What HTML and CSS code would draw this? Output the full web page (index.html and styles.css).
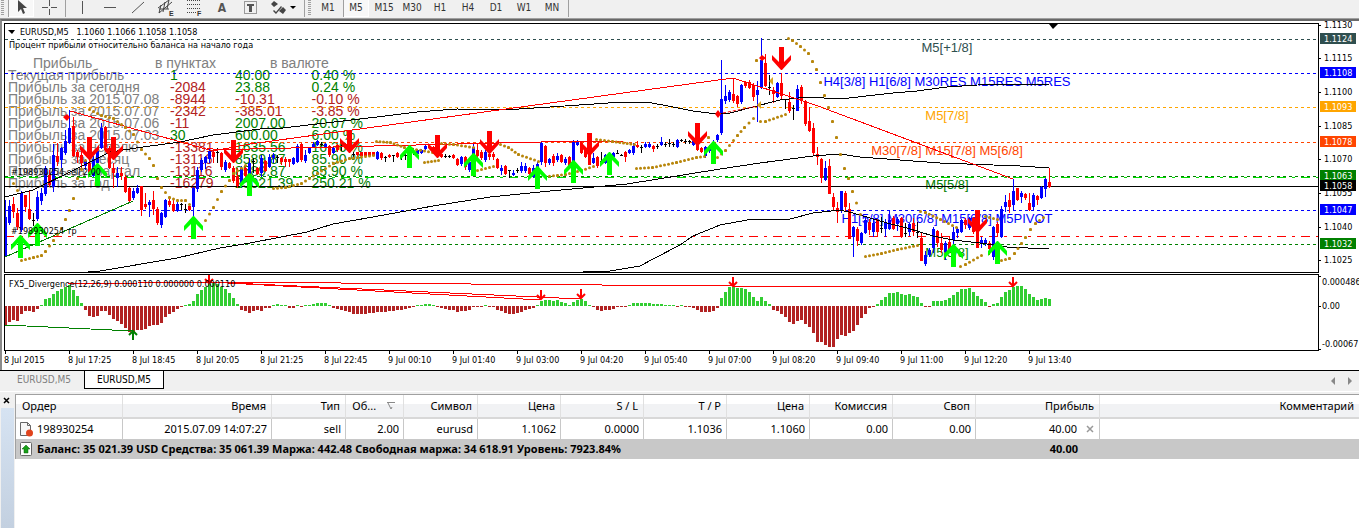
FILE: index.html
```html
<!DOCTYPE html>
<html lang="ru">
<head>
  <meta charset="UTF-8" />
  <meta name="viewport" content="width=device-width, initial-scale=1.0" />
  <title>EURUSD,M5</title>
  <link rel="stylesheet" href="styles.css">
</head>
<body>
  <div class="toolbar">
    <span class="grip"></span>
    <div class="tools">
      <button class="tool active" type="button" aria-label="Курсор">
        <svg width="20" height="18"><path d="M7 0v12l3-3 2 5 2-1-2-5h4z" fill="#444"/></svg>
      </button>
      <button class="tool" type="button" aria-label="Перекрестие">
        <svg width="20" height="18"><path d="M3 7.5h6M12 7.5h6M10.5 0v6M10.5 9v6" stroke="#555"/></svg>
      </button>
    </div>
    <span class="sep"></span>
    <div class="tools">
      <button class="tool" type="button" aria-label="Вертикальная линия">
        <svg width="20" height="18"><path d="M10.5 1v13" stroke="#555"/></svg>
      </button>
      <button class="tool" type="button" aria-label="Горизонтальная линия">
        <svg width="20" height="18"><path d="M4 7.5h12" stroke="#555"/></svg>
      </button>
      <button class="tool" type="button" aria-label="Трендовая линия">
        <svg width="20" height="18"><path d="M4 13L16 2" stroke="#555"/></svg>
      </button>
      <button class="tool" type="button" aria-label="Канал">
        <svg width="20" height="18"><path d="M2 8L13 0M3 13L16 2M5 5l-2 8M9 2L7 12M13 0l-2 9M3 9h10" stroke="#444" fill="none"/><text x="13" y="16" class="icon-letter">E</text></svg>
      </button>
      <button class="tool" type="button" aria-label="Фибоначчи">
        <svg width="20" height="18"><path d="M3 .5h14M3 4.5h14M3 8.5h14M3 12.5h9" stroke="#444" stroke-dasharray="1 1"/><text x="13" y="16" class="icon-letter">F</text></svg>
      </button>
      <button class="tool letter" type="button">A</button>
      <button class="tool" type="button" aria-label="Метка">
        <svg width="20" height="18"><rect x="4.5" y="1.5" width="12" height="12" fill="none" stroke="#444" stroke-dasharray="1 1"/><path d="M7 4h7v2h-2v6h-3V6H7z" fill="#555"/></svg>
      </button>
      <button class="tool arrows" type="button" aria-label="Стрелки">
        <svg width="28" height="18"><path d="M5 1l4 3-4 3-3-3zM5 10l2 2 5-6 1 1-6 7-3-3zM14 7l3 3-3 4-4-3z" fill="#444"/><path d="M24 6h6l-3 3z" fill="#000" transform="translate(-3 0)"/></svg>
      </button>
    </div>
    <span class="sep"></span>
    <span class="grip"></span>
    <div class="tools">
      <button class="tool" type="button">M1</button>
      <button class="tool active" type="button">M5</button>
      <button class="tool" type="button">M15</button>
      <button class="tool" type="button">M30</button>
      <button class="tool" type="button">H1</button>
      <button class="tool" type="button">H4</button>
      <button class="tool" type="button">D1</button>
      <button class="tool" type="button">W1</button>
      <button class="tool" type="button">MN</button>
    </div>
    <span class="sep"></span>
  </div>

  <div class="chart-window">
    <div class="chart-row price-row">
      <div class="pane">
        <table class="profit">
          <thead>
            <tr><th class="c-name">Прибыль</th><th class="c-points">в пунктах</th><th class="c-money" colspan="2">в валюте</th></tr>
          </thead>
          <tbody>
            <tr><td>Текущая прибыль</td><td class="up">1</td><td class="up">40.00</td><td class="up">0.40 %</td></tr>
            <tr><td>Прибыль за сегодня</td><td class="down">-2084</td><td class="up">23.88</td><td class="up">0.24 %</td></tr>
            <tr><td>Прибыль за 2015.07.08</td><td class="down">-8944</td><td class="down">-10.31</td><td class="down">-0.10 %</td></tr>
            <tr><td>Прибыль за 2015.07.07</td><td class="down">-2342</td><td class="down">-385.01</td><td class="down">-3.85 %</td></tr>
            <tr><td>Прибыль за 2015.07.06</td><td class="down">-11</td><td class="up">2007.00</td><td class="up">20.07 %</td></tr>
            <tr><td>Прибыль за 2015.07.03</td><td class="up">30</td><td class="up">600.00</td><td class="up">6.00 %</td></tr>
            <tr><td>Прибыль за неделю</td><td class="down">-13381</td><td class="up">1635.56</td><td class="up">16.36 %</td></tr>
            <tr><td>Прибыль за месяц</td><td class="down">-13116</td><td class="up">8589.87</td><td class="up">85.90 %</td></tr>
            <tr><td>Прибыль за квартал</td><td class="down">-13116</td><td class="up">8589.87</td><td class="up">85.90 %</td></tr>
            <tr><td>Прибыль за год</td><td class="down">-16279</td><td class="up">25021.39</td><td class="up">250.21 %</td></tr>
          </tbody>
        </table>
        <svg class="plot" id="price"></svg>
      </div>
      <svg class="axis" id="priceAxis"></svg>
    </div>
    <div class="chart-row osc-row">
      <div class="pane"><svg class="plot" id="osc"></svg></div>
      <svg class="axis" id="oscAxis"></svg>
    </div>
    <svg class="time-axis" id="timeAxis"></svg>
  </div>

  <div class="tabs">
    <button class="tab" type="button">EURUSD,M5</button>
    <button class="tab current" type="button">EURUSD,M5</button>
    <div class="tab-scroll">
      <button type="button" aria-label="Назад"><svg width="6" height="8"><path d="M5 0v8L1 4z" fill="#888"/></svg></button>
      <button type="button" aria-label="Вперёд"><svg width="6" height="8"><path d="M1 0v8l4-4z" fill="#888"/></svg></button>
    </div>
  </div>

  <div class="terminal">
    <div class="side">
      <button class="close" type="button" aria-label="Закрыть"><svg width="8" height="8"><path d="M1 1l5 5M6 1L1 6" stroke="#000" stroke-width="1.5"/></svg></button>
      <div class="side-strip"></div>
    </div>
    <table class="orders">
      <colgroup>
        <col class="w-order"><col class="w-time"><col class="w-symbol"><col class="w-lots"><col class="w-symbol">
        <col class="w-num"><col class="w-num"><col class="w-num"><col class="w-num"><col class="w-num"><col class="w-num">
        <col class="w-profit"><col>
      </colgroup>
      <thead>
        <tr>
          <th class="left">Ордер</th><th>Время</th><th>Тип</th>
          <th class="lots">Об... <svg width="8" height="8"><path d="M0 .5h8M1 1l3 6 1-2" stroke="#888" fill="none"/></svg></th>
          <th>Символ</th><th>Цена</th><th>S / L</th><th>T / P</th><th>Цена</th><th>Комиссия</th><th>Своп</th><th>Прибыль</th><th>Комментарий</th>
        </tr>
      </thead>
      <tbody>
        <tr>
          <td class="left">
            <div class="with-icon">
              <svg width="15" height="16"><path d="M1.5 1.5h7l3 3v10h-10z" fill="#f6f6f6" stroke="#666"/><path d="M8.5 1.5v3h3" fill="none" stroke="#666"/><circle cx="10.500" cy="12" r="3.5" fill="#e0431c"/></svg>
              <span>198930254</span>
            </div>
          </td>
          <td>2015.07.09 14:07:27</td><td>sell</td><td>2.00</td><td>eurusd</td><td>1.1062</td><td>0.0000</td><td>1.1036</td><td>1.1060</td><td>0.00</td><td>0.00</td>
          <td class="profit-cell">40.00 <button class="close-order" type="button" aria-label="Закрыть ордер"><svg width="8" height="8"><path d="M1 1l6 6M7 1L1 7" stroke="#999" stroke-width="1.5"/></svg></button></td>
          <td></td>
        </tr>
        <tr class="summary">
          <td class="left" colspan="11">
            <div class="with-icon">
              <svg width="15" height="16"><rect x="1.5" y="1.5" width="11" height="13" rx="1" fill="#fff" stroke="#666"/><path d="M7 4l4 4H9v4H5V8H3z" fill="#18a018" stroke="#0a600a" stroke-width=".5"/></svg>
              <span>Баланс: 35 021.39 USD</span><span>Средства: 35 061.39</span><span>Маржа: 442.48</span><span>Свободная маржа: 34 618.91</span><span>Уровень: 7923.84%</span>
            </div>
          </td>
          <td class="profit-cell">40.00</td>
          <td></td>
        </tr>
      </tbody>
    </table>
  </div>

  <script src="chart.js"></script>
</body>
</html>
```

FILE: styles.css
```css
body {
  margin: 0;
  min-height: 100vh;
  display: flex;
  flex-direction: column;
  background-color: #f0f0f0;
  color: #000;
  font-family: "Noto Sans", sans-serif;
  font-size: 11px;
  overflow: hidden;
}

button {
  margin: 0;
  padding: 0;
  border: none;
  background: none;
  font: inherit;
  color: inherit;
}

svg {
  display: block;
}

/* Toolbar */
.toolbar {
  height: 18px;
  display: flex;
  align-items: flex-start;
  border-bottom: 1px solid #a0a0a0;
}

.grip {
  width: 3px;
  height: 16px;
  margin: 0 3px 0 1px;
  background: repeating-linear-gradient(#a0a0a0 0 1px, #f0f0f0 1px 2px);
}

.tools {
  display: flex;
}

.tool {
  width: 28px;
  height: 17px;
  display: flex;
  justify-content: center;
  font-family: "DejaVu Sans Condensed", sans-serif;
  font-size: 10px;
  line-height: 16px;
  color: #333;
}

.tool.active {
  width: 26px;
  margin: 0 1px;
  background-color: #f8f8f8;
  box-shadow: inset 1px 0 #a0a0a0, inset -1px -1px #fff;
}

.tool.letter {
  font-size: 12px;
  font-weight: bold;
  color: #555;
}

.tool.arrows {
  width: 38px;
}

.icon-letter {
  font: bold 7px "Liberation Sans", sans-serif;
  fill: #333;
}

.sep {
  width: 1px;
  height: 17px;
  margin: 0 2px;
  background-color: #a0a0a0;
}

/* Chart window */
.chart-window {
  background-color: #fff;
  border-top: 2px solid #696969;
  border-left: 2px solid #8a8a8a;
  padding: 2px 0 0 2px;
}

.chart-row {
  display: flex;
}

.price-row {
  height: 250px;
  margin-bottom: 1px;
}

.osc-row {
  height: 77px;
}

.pane {
  flex: 1;
  min-width: 0;
  position: relative;
  border: 1px solid #000;
}

.plot {
  width: 100%;
  height: 100%;
  position: relative;
}

.axis {
  width: 40px;
  height: 100%;
  overflow: visible;
}

.time-axis {
  width: 100%;
  height: 19px;
}

.chart-text {
  font-family: "DejaVu Sans Condensed", sans-serif;
  font-size: 9px;
}

.level {
  font-family: "Liberation Sans", sans-serif;
  font-size: 13px;
  text-anchor: middle;
}

/* Profit statistics drawn over the chart */
.profit {
  position: absolute;
  top: 33px;
  left: 3px;
  width: 380px;
  table-layout: fixed;
  border-collapse: collapse;
  font-family: "Liberation Sans", sans-serif;
  font-size: 14px;
  line-height: 12px;
  color: #808080;
  white-space: nowrap;
}

.profit th,
.profit td {
  height: 12px;
  padding: 0;
  font-weight: normal;
  text-align: left;
}

.profit .c-name {
  width: 137px;
  padding-left: 25px;
}

.profit .c-points {
  width: 65px;
  text-indent: -15px;
}

.profit .c-money {
  text-indent: 35px;
}

.up {
  color: #008000;
}

.down {
  color: #b22222;
}

/* Chart tabs */
.tabs {
  display: flex;
  height: 20px;
  border-top: 1px solid #000;
  border-bottom: 1px solid #fff;
  padding-left: 4px;
}

.tab {
  width: 80px;
  height: 18px;
  color: #808080;
  font-family: "DejaVu Sans Condensed", sans-serif;
  font-size: 10px;
  line-height: 16px;
}

.tab.current {
  background-color: #fff;
  color: #000;
  border: 1px solid #000;
  border-top: none;
}

.tab-scroll {
  display: flex;
  gap: 11px;
  margin-left: auto;
  padding-right: 6px;
}

/* Terminal */
.terminal {
  flex: 1;
  display: flex;
  align-items: flex-start;
  margin-top: 2px;
  background: linear-gradient(to right, #f0f0f0 15px, #fff 15px);
}

.side {
  width: 15px;
  align-self: stretch;
  display: flex;
  flex-direction: column;
}

.close {
  height: 14px;
  padding-left: 3px;
}

.side-strip {
  flex: 1;
  margin: 0 1px;
  background: linear-gradient(#d6e3f2, #c3d0e0);
}

.orders {
  flex: 1;
  table-layout: fixed;
  border-collapse: separate;
  border-spacing: 0;
  border-left: 1px solid #a0a0a0;
  border-top: 1px solid #a0a0a0;
  white-space: nowrap;
}

.orders th,
.orders td {
  height: 20px;
  box-sizing: border-box;
  padding: 0 4px 0 6px;
  border-right: 1px solid #c8c8c8;
  text-align: right;
  font-weight: normal;
  line-height: 18px;
}

.orders th {
  height: 24px;
  padding-right: 5px;
  background: linear-gradient(#fff 40%, #f1f2f4 41%);
  border-right-color: #e0e0e0;
  border-bottom: 2px solid #d8d8d8;
}

.orders .left {
  text-align: left;
}

.orders th:last-child,
.orders td:last-child {
  border-right: none;
}

.orders td.left {
  padding-left: 3px;
}

.with-icon {
  display: flex;
  align-items: center;
  gap: 3px;
}

.lots svg {
  display: inline-block;
  margin: 0 3px 0 8px;
}

.orders .summary td {
  background-color: #c8c8c8;
  border-right: none;
  font-weight: bold;
}

.orders .profit-cell {
  padding-right: 22px;
  position: relative;
}

.close-order {
  position: absolute;
  right: 5px;
  top: 6px;
}

.w-order { width: 107px; }
.w-time { width: 149px; }
.w-symbol { width: 74px; }
.w-lots { width: 58px; }
.w-num { width: 83px; }
.w-profit { width: 124px; }
```

FILE: chart.js
```js
const NS = "http://www.w3.org/2000/svg";

function add(parent, tag, attrs, text) {
  const el = document.createElementNS(NS, tag);
  for (const key in attrs) el.setAttribute(key, attrs[key]);
  if (text) el.textContent = text;
  parent.appendChild(el);
  return el;
}

// colour, body top, body bottom, high, low
const candles = `b 217 256 200 257;b 206 223 200 225;r 204 212 197 218;r 213 227 208 230;b 193 230 191 232;r 195 207 195 212;r 209 219 191 220;k 220 221 213 226;b 197 219 191 221;b 193 201 188 205
b 168 194 166 196;r 175 185 170 187;b 155 187 144 192;r 156 162 143 166;b 148 160 147 168;b 141 153 130 155;b 128 143 110 144;r 126 156 117 157;r 152 157 150 163;r 155 163 147 168
b 161 166 159 170;r 163 175 160 176;b 159 176 156 177;b 151 163 147 165;b 128 148 123 149;r 127 147 126 150;r 148 168 146 169;r 168 173 163 188;b 173 178 167 187;r 173 176 167 180
r 177 192 175 193;r 188 201 187 203;b 191 198 188 200;b 188 193 185 194;r 186 210 186 216;r 204 207 193 209;b 202 205 200 217;r 200 209 191 215;r 209 223 207 225;b 213 225 212 228
b 200 217 199 218;r 201 205 199 207;r 204 211 198 212;b 204 211 202 212;k 204 205 203 210;k 209 210 204 213;r 206 210 206 211;b 188 207 187 220;b 170 189 167 192;b 160 170 158 172
b 157 163 156 169;b 151 159 148 163;r 152 157 149 163;k 152 153 148 163;r 153 167 152 170;b 162 170 160 172;r 163 168 162 169;r 168 181 166 183;r 176 186 168 188;b 168 185 166 187
r 168 176 166 178;b 163 175 158 176;k 161 162 158 173;r 168 174 167 175;b 158 173 155 177;r 161 171 160 172;b 157 167 154 168;b 155 158 153 163;k 157 158 155 163;r 158 162 157 165
r 159 162 157 167;r 159 162 159 167;b 158 164 157 165;b 146 162 144 163;r 144 160 143 162;b 155 161 150 163;b 148 153 147 154;b 144 147 142 148;b 141 145 140 146;k 144 145 142 146
b 144 147 143 148;r 146 155 145 157;b 148 153 147 154;r 145 150 144 152;k 146 147 144 151;r 144 148 143 149;r 140 151 138 152;k 154 155 152 157;r 152 155 152 156;r 152 156 152 156
r 152 156 152 156;r 152 156 152 156;r 152 156 152 156;b 152 159 151 160;r 153 158 152 160;k 157 158 156 162;r 155 157 154 158;k 155 156 155 162;r 153 157 152 158;k 155 156 154 160
k 155 156 154 160;b 150 153 149 154;k 152 153 148 155;b 150 154 149 156;b 150 153 149 154;b 146 149 145 150;k 147 148 144 149;r 147 153 146 154;b 153 157 152 158;r 154 157 154 158
k 156 157 154 158;k 156 157 155 158;r 155 158 154 159;r 159 165 158 166;b 157 164 156 166;r 157 167 156 170;b 162 170 158 172;b 147 160 144 162;r 150 156 143 160;r 152 158 150 160
b 152 160 150 162;r 154 157 150 160;r 154 157 152 160;r 159 168 158 169;b 168 171 165 175;r 166 174 165 175;k 170 171 170 178;b 173 175 170 176;k 170 171 168 173;b 166 171 162 173
b 166 171 163 173;r 168 174 167 177;b 168 177 165 178;b 164 172 162 173;b 143 162 142 165;r 146 163 145 167;b 159 163 158 165;r 156 163 154 166;b 156 160 153 162;r 155 162 154 163
b 159 163 157 165;r 157 166 156 168;b 142 165 140 166;b 141 145 140 146;r 143 153 142 154;r 148 157 147 158;r 153 165 152 165;b 158 163 153 164;r 157 166 156 168;k 161 162 152 163
b 155 163 154 164;b 154 157 153 158;b 153 157 152 158;k 153 154 150 154;k 155 156 154 156;r 152 157 151 162;b 150 153 149 154;b 146 153 143 155;r 145 147 141 148;k 147 148 145 153
b 144 147 142 148;b 144 147 142 148;r 146 149 145 152;k 146 147 144 149;b 142 145 137 146;k 144 145 142 147;k 143 144 139 147;k 144 145 142 147;b 140 147 139 148;k 140 141 139 142
k 141 142 139 144;k 141 142 140 144;b 141 145 140 146;r 143 150 142 151;r 148 152 147 153;b 147 156 146 158;b 147 151 145 153;b 142 147 140 148;b 135 140 134 142;b 99 133 60 135
b 96 101 85 104;b 92 100 90 102;r 94 101 78 103;r 96 104 95 107;b 85 102 84 104;r 82 86 81 88;r 82 88 80 89;r 85 97 83 101;b 90 95 81 122;b 60 88 38 89
r 63 86 54 87;k 87 88 75 95;r 90 94 87 103;b 83 97 82 98;r 83 96 73 100;k 99 100 99 109;r 102 111 92 113;k 108 109 105 120;b 89 111 85 111;r 87 100 85 104
r 101 124 100 126;r 121 131 107 132;r 128 153 123 156;r 154 157 147 165;r 159 178 158 183;b 168 180 161 181;r 166 194 159 194;r 197 207 193 211;r 208 212 202 223;b 191 211 191 213
r 193 207 191 211;r 209 239 203 239;b 227 237 226 257;r 229 241 227 246;b 233 243 232 245;b 220 233 217 234;r 222 230 219 235;b 223 232 218 237;r 220 232 219 237;k 228 229 217 233
b 222 229 219 237;b 220 229 210 230;r 218 229 216 230;b 219 224 217 231;r 218 237 217 238;k 233 234 223 237;b 224 232 223 236;r 223 232 218 236;k 232 233 222 238;r 238 261 232 261
b 255 264 251 266;b 250 255 248 257;b 229 248 227 253;r 231 243 230 247;r 243 250 233 253;b 243 252 241 260;r 242 250 237 252;b 232 240 227 246;b 229 233 227 238;b 220 232 219 233
r 220 225 218 229;b 218 228 217 230;r 218 232 217 234;r 232 248 231 248;b 240 244 237 248;b 240 243 238 246;r 243 249 241 255;b 227 257 226 260;r 224 233 222 236;b 209 237 206 238
b 202 207 195 212;r 200 207 193 213;b 191 205 179 210;r 188 200 188 201;b 193 197 191 203;r 194 198 193 200;r 203 210 193 211;b 195 207 193 210;r 196 200 195 205;b 187 198 186 199
b 179 189 178 197;r 182 187 168 188`.split(/[;\n]/).map(s => s.split(" "));

const bars = [
  -19,-16,-14,-15,-8,-5,-5,-6,-3,1,7,8,12,15,17,19,21,16,10,3,-4,-10,-11,-10,-5,-5,-9,-13,-15,-18,
  -22,-26,-26,-24,-24,-23,-20,-19,-19,-17,-11,-8,-6,-3,-1,1,2,5,12,16,19,22,23,22,19,17,13,8,2,-4,
  -5,-7,-5,-4,-5,-2,-2,1,2,1,1,-2,-2,1,-1,1,1,2,3,3,3,1,-2,-3,-4,-5,-6,-8,-8,-8,
  -8,-7,-7,-6,-6,-6,-5,-5,-4,-4,-3,-2,-1,1,1,2,2,1,-1,-2,-3,-4,-4,-6,-5,-5,-4,-1,-1,-1,
  1,-1,-1,-4,-5,-7,-8,-8,-7,-6,-4,-3,-2,1,5,6,6,5,6,4,3,1,4,6,7,5,1,-1,-4,-5,
  -4,-4,-3,-1,-1,-1,1,3,3,3,3,3,2,2,2,1,1,1,-1,1,-1,-1,-2,-4,-6,-6,-6,-5,-2,8,
  14,19,19,18,18,17,14,9,5,9,5,2,-4,-5,-8,-11,-16,-18,-15,-14,-18,-21,-27,-36,-36,-39,-41,-41,-33,-29,
  -30,-27,-25,-19,-12,-8,-2,-1,2,6,9,13,13,14,12,11,12,10,9,3,-1,-1,5,5,5,6,8,11,14,17,
  17,18,14,10,7,4,-1,2,3,9,14,16,19,20,20,17,12,9,6,7,8,7
];

// Parabolic SAR, one dot per candle along each segment
const sar = [
  [13,183, 17,190], [21,260, 33,257, 41,255, 45,251, 53,240, 61,228, 65,219, 69,210, 73,198, 77,178, 85,160],
  [89,109, 101,115, 113,118, 125,127, 133,134, 141,149, 149,158, 153,165, 157,178, 161,187, 169,197, 177,200, 185,200, 189,204],
  [205,220, 213,207, 221,191, 229,180, 233,173, 245,165], [273,188, 285,187, 301,183, 317,173, 333,163, 349,158, 373,155],
  [376,141, 390,142, 404,147, 432,152], [424,162, 438,160], [441,143, 453,144, 473,147], [477,170, 493,166],
  [500,144, 508,147, 518,154, 538,161], [545,176, 557,175, 565,174, 581,170, 593,166], [596,139, 612,141, 634,144],
  [636,168, 652,167, 676,162, 696,157, 704,156], [708,137, 708,137], [717,157, 725,150, 737,135, 744,127, 753,118],
  [756,60, 756,60], [760,121, 765,121, 785,114],
  [788,38, 792,40, 800,46, 808,53, 812,61, 816,69, 820,82, 824,95, 828,107, 832,121, 836,137, 840,154, 844,168, 848,178, 852,191, 860,214],
  [865,256, 881,253, 897,249, 917,245], [920,211, 925,212, 940,219, 956,227], [960,266, 965,264, 981,255], [985,216, 997,219],
  [1001,260, 1009,258, 1014,253, 1021,243, 1025,237, 1030,229, 1035,223, 1043,217]
];

const bands = [
  "5,197 33,190 70,172 110,152 143,147 180,142 213,135 260,129 283,128 317,124 377,117 417,112 457,109 503,110 550,107 623,102 647,102 673,107 693,111 717,114 730,113 753,107 780,100 807,97 840,99 893,93 917,91 947,87 993,84 1049,84",
  "88,272 100,271 177,258 220,248 250,243 307,232 333,224 373,217 433,206 490,197 550,191 627,184 683,175 720,169 760,163 813,156 840,154 860,157 940,163 1020,166 1049,168",
  "583,272 610,271 640,266 653,259 680,245 693,236 720,225 753,219 790,219 813,213 840,210 853,213 887,223 907,228 933,236 953,240 980,243 1007,247 1049,249"
];

const levels = [
  [39, "#2f4f4f", "1.1124", "M5[+1/8]"],
  [73, "#0000ff", "1.1108", "H4[3/8] H1[6/8] M30RES M15RES M5RES"],
  [107, "#ffa500", "1.1093", "M5[7/8]"],
  [142, "#ff4500", "1.1078", "M30[7/8] M15[7/8] M5[6/8]"],
  [176, "#008000", "1.1063", "M5[5/8]"],
  [210, "#0000ff", "1.1047", "H1[5/8] M30[6/8] M15[6/8] M5PIVOT"],
  [244, "#008000", "1.1032", "M5[3/8]"]
];

const sells = [[89,160], [113,160], [233,163], [349,153], [437,158], [489,154], [589,156], [697,146], [781,70], [977,233]];
const buys = [[20,235], [37,223], [97,163], [193,216], [249,173], [409,145], [473,153], [537,166], [573,160], [609,152], [713,141], [953,244], [997,241]];
const fill = { b: "#0000ff", r: "#ff0000", k: "#000000" };

// Price pane
const price = add(document.getElementById("price"), "g", { transform: "translate(-5 -24)" });
levels.forEach(([y, color, , label]) => {
  add(price, "text", { x: 947, y: y + 13, fill: color, class: "level" }, label);
  add(price, "line", { x1: 5, x2: "200%", y1: y + .5, y2: y + .5, stroke: color, "stroke-dasharray": "3 3" });
});
add(price, "line", { x1: 5, x2: "200%", y1: 177.5, y2: 177.5, stroke: "#00e000", "stroke-dasharray": "9 6 3 6" });
add(price, "line", { x1: 5, x2: "200%", y1: 186.5, y2: 186.5, stroke: "#000" });
add(price, "line", { x1: 5, x2: "200%", y1: 236.5, y2: 236.5, stroke: "#ff0000", "stroke-dasharray": "9 6 3 6" });

candles.forEach(([c, top, bottom, high, low], i) => {
  const x = 5 + i * 4;
  add(price, "rect", { x: x, y: high, width: 1, height: low - high, fill: fill[c] });
  add(price, "rect", { x: x - 1, y: top, width: 3, height: bottom - top, fill: fill[c] });
});

bands.forEach(points => add(price, "polyline", { points, fill: "none", stroke: "#000", "shape-rendering": "crispEdges" }));
["70,111 213,151 250,144 550,103 733,78 818,106 1013,179", "207,148 219,150 250,149 541,142 624,141"].forEach(points =>
  add(price, "polyline", { points, fill: "none", stroke: "#ff0000", "shape-rendering": "crispEdges" }));
add(price, "line", { x1: 5, y1: 257, x2: 133, y2: 201, stroke: "#008000", "shape-rendering": "crispEdges" });
add(price, "line", { x1: 718, y1: 114, x2: 758, y2: 106, stroke: "#ff0000", "stroke-dasharray": "3 2" });

sar.forEach(p => {
  for (let i = 0; i < p.length - 2; i += 2) {
    const steps = Math.max(1, Math.round((p[i + 2] - p[i]) / 4));
    for (let s = 0; s <= steps; s++) {
      const t = s / steps;
      add(price, "circle", { cx: p[i] + (p[i + 2] - p[i]) * t + .5, cy: p[i + 1] + (p[i + 3] - p[i + 1]) * t + .5, r: 1.5, fill: "#b8860b" });
    }
  }
});

["M773 77v8l-4-4z", "M761 101v8l-4-4z"].forEach(d => add(price, "path", { d, fill: "#daa520" }));
["M759 58l3-3 4 3-4 3z", "M715 114l3-4 3 4-3 4z", "M63 117l4-3 3 3-3 4z"].forEach(d => add(price, "path", { d, fill: "#ff0000" }));
sells.forEach(([x, y]) => add(price, "path", { d: `M${x - 2} ${y - 23}h5v15l7-7v5l-9 10h-1l-9-10v-5l7 7z`, fill: "#ff0000" }));
buys.forEach(([x, y]) => add(price, "path", { d: `M${x} ${y}h1l9 10v5l-7-7v15h-5v-15l-7 7v-5z`, fill: "#00ff00" }));

add(price, "path", { d: "M8 30h7l-3 4z" });
add(price, "path", { d: "M1049 24h9l-5 5z" });
add(price, "text", { x: 20, y: 35, class: "chart-text" }, "EURUSD,M5\u00a0\u00a0 1.1060 1.1066 1.1058 1.1058");
add(price, "text", { x: 9, y: 48, class: "chart-text" }, "Процент прибыли относительно баланса на начало года");
add(price, "text", { x: 11, y: 175, class: "chart-text" }, "#198930254 sell 2.00");
add(price, "text", { x: 11, y: 234, class: "chart-text" }, "#198930254 тр");

// Price scale
const scale = add(document.getElementById("priceAxis"), "g", { transform: "translate(-1319 -23)" });
function badge(y, color, value) {
  add(scale, "rect", { x: 1320, y: y - 6, width: 36, height: 11, fill: color });
  add(scale, "text", { x: 1324, y: y + 3, fill: "#fff", class: "chart-text" }, value);
}
[["1.1130", 25], ["1.1115", 58], ["1.1100", 92], ["1.1085", 126], ["1.1070", 159], ["1.1055", 193], ["1.1040", 227], ["1.1025", 260]].forEach(([value, y]) => {
  add(scale, "rect", { x: 1319, y: y, width: 2, height: 1 });
  add(scale, "text", { x: 1324, y: y + 3, class: "chart-text" }, value);
});
levels.forEach(([y, color, value]) => badge(y, color, value));
badge(186, "#000", "1.1058");

// Oscillator
const osc = add(document.getElementById("osc"), "g", { transform: "translate(-5 -275)" });
bars.forEach((v, i) => add(osc, "rect", {
  x: 4 + i * 4, y: v > 0 ? 306 - v : 306, width: 3, height: Math.abs(v), fill: v > 0 ? "#32cd32" : "#b22222"
}));
["68,284 209,282 733,286 1013,286", "209,282 541,300", "209,282 581,299"].forEach(points =>
  add(osc, "polyline", { points, fill: "none", stroke: "#ff0000", "shape-rendering": "crispEdges" }));
add(osc, "line", { x1: 5, y1: 325, x2: 133, y2: 331, stroke: "#008000", "shape-rendering": "crispEdges" });
[[209,284], [541,300], [581,299], [733,287], [1013,287]].forEach(([x, y]) =>
  add(osc, "path", { d: `M${x} ${y - 10}v9M${x - 4} ${y - 5}l4 4 4-4`, fill: "none", stroke: "#ff0000", "stroke-width": 2 }));
add(osc, "path", { d: "M133 340v-9M129 335l4-4 4 4", fill: "none", stroke: "#008000", "stroke-width": 2 });
add(osc, "text", { x: 9, y: 287, class: "chart-text" }, "FX5_Divergence(12,26,9) 0.000110 0.000000 0.000110");

const oscScale = add(document.getElementById("oscAxis"), "g", { transform: "translate(-1319 -274)" });
[["0.000486", 282, 276], ["0.00", 306, 306], ["-0.00067", 344, 349]].forEach(([value, y, tick]) => {
  add(oscScale, "rect", { x: 1319, y: tick, width: 2, height: 1 });
  add(oscScale, "text", { x: 1322, y: y + 3, class: "chart-text" }, value);
});

// Time scale
const time = add(document.getElementById("timeAxis"), "g", { transform: "translate(-4 0)" });
["8 Jul 2015", "8 Jul 17:25", "8 Jul 18:45", "8 Jul 20:05", "8 Jul 21:25", "8 Jul 22:45", "9 Jul 00:10", "9 Jul 01:40", "9 Jul 03:00",
 "9 Jul 04:20", "9 Jul 05:40", "9 Jul 07:00", "9 Jul 08:20", "9 Jul 09:40", "9 Jul 11:00", "9 Jul 12:20", "9 Jul 13:40"].forEach((label, i) => {
  add(time, "rect", { x: 5 + i * 64, y: 0, width: 1, height: 3 });
  add(time, "text", { x: 4 + i * 64, y: 12, class: "chart-text" }, label);
});
```
